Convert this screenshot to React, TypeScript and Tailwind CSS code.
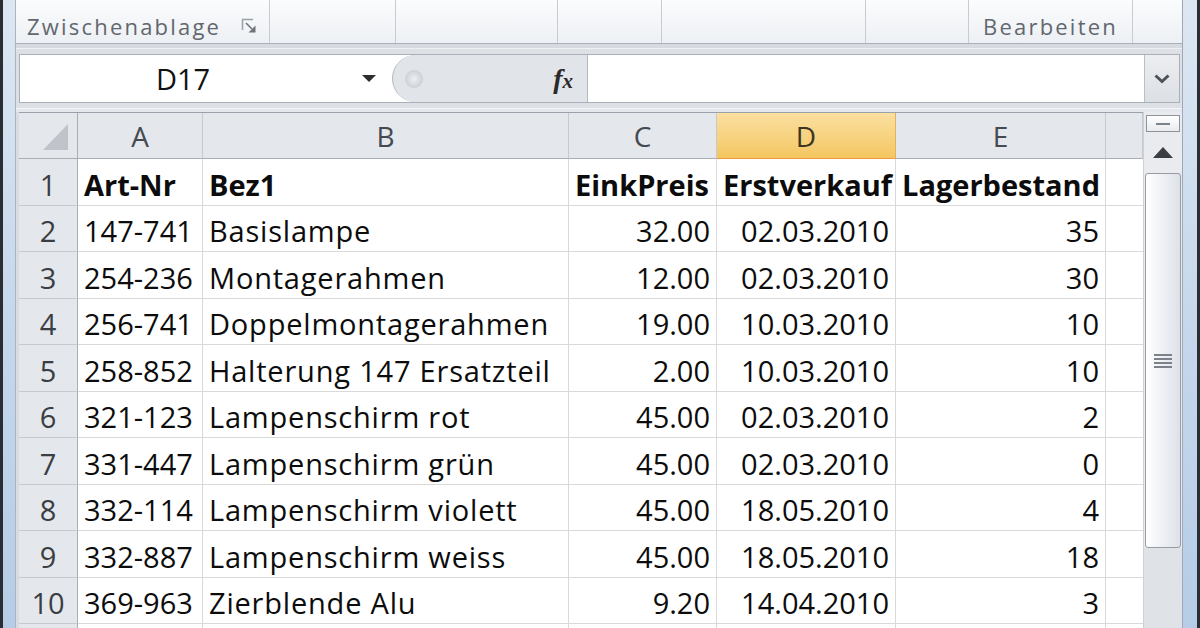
import React from "react";

type Row = [string, string, string, string, string];

const rows: Row[] = [
  ["Art-Nr", "Bez1", "EinkPreis", "Erstverkauf", "Lagerbestand"],
  ["147-741", "Basislampe", "32.00", "02.03.2010", "35"],
  ["254-236", "Montagerahmen", "12.00", "02.03.2010", "30"],
  ["256-741", "Doppelmontagerahmen", "19.00", "10.03.2010", "10"],
  ["258-852", "Halterung 147 Ersatzteil", "2.00", "10.03.2010", "10"],
  ["321-123", "Lampenschirm rot", "45.00", "02.03.2010", "2"],
  ["331-447", "Lampenschirm grün", "45.00", "02.03.2010", "0"],
  ["332-114", "Lampenschirm violett", "45.00", "18.05.2010", "4"],
  ["332-887", "Lampenschirm weiss", "45.00", "18.05.2010", "18"],
  ["369-963", "Zierblende Alu", "9.20", "14.04.2010", "3"],
];

const gridCols = "grid grid-cols-[59px_125px_366px_148px_179px_210px_37px]";

function DialogLauncher() {
  return (
    <svg width="16" height="16" viewBox="0 0 16 16" aria-hidden>
      <path d="M1.5 12 V1.5 H12" fill="none" stroke="#9aa0a8" strokeWidth="1.5" />
      <path d="M5 5 L11 11" stroke="#6f757d" strokeWidth="1.6" />
      <path d="M14.5 7.5 V14.5 H7.5 Z" fill="#6f757d" />
    </svg>
  );
}

function Ribbon() {
  const groups = ["w-[126px]", "w-[162px]", "w-[104px]", "w-[204px]", "w-[103px]"];
  return (
    <div className="flex h-[44px] shrink-0 border-b border-[#a9afb8] bg-linear-to-b from-[#fbfcfd] to-[#edf0f4] text-[22px] tracking-[2.2px] text-[#62676e]">
      {/* Zwischenablage group */}
      <div className="flex w-[254px] items-end justify-between border-r border-[#c7ccd3] pb-[2px] pl-[11px] pr-[12px]">
        <span className="leading-[30px]">Zwischenablage</span>
        <span className="mb-[7px]">
          <DialogLauncher />
        </span>
      </div>
      {groups.map((w, i) => (
        <div key={i} className={`${w} border-r border-[#c7ccd3]`} />
      ))}
      <div className="flex w-[164px] items-end justify-center border-r border-[#c7ccd3] pb-[2px]">
        <span className="leading-[30px]">Bearbeiten</span>
      </div>
      <div className="w-[49px]" />
    </div>
  );
}

function FormulaBar() {
  return (
    <div className="flex h-[68px] shrink-0 flex-col bg-[#dde1e6]">
      <div className="h-[5px] border-b border-[#eef0f3] bg-[#d6dae0]" />
      <div className="flex h-[54px] pl-[3px] pr-[2px] pt-[5px]">
        <div className="flex h-[49px] flex-1 border border-[#a9b0b9] bg-white">
          {/* Name box */}
          <div className="flex w-[372px] items-center">
            <span className="flex-1 text-center text-[29px] leading-none text-[#111]">D17</span>
            <span className="flex w-[46px] items-center justify-center">
              <svg width="14" height="8" viewBox="0 0 14 8" aria-hidden>
                <path d="M0 0 H14 L7 7 Z" fill="#2e2e2e" />
              </svg>
            </span>
          </div>
          {/* fx area */}
          <div className="flex w-[196px] items-center rounded-l-[24px] border-r border-l border-[#b4b9c0] bg-[#e1e4e8]">
            <span className="ml-[12px] h-[18px] w-[18px] rounded-full bg-radial from-[#eef0f2] to-[#bfc3c9]" />
            <span className="ml-auto mr-[14px] font-['Liberation_Serif',serif] text-[28px] font-bold italic leading-none text-[#2a2a2a]">
              f<span className="text-[21px]">x</span>
            </span>
          </div>
          {/* Formula input */}
          <div className="flex-1 bg-white" />
          {/* Expand button */}
          <div className="flex w-[35px] items-center justify-center border-l border-[#b9bfc7] bg-linear-to-b from-[#eceef1] to-[#dcdfe4]">
            <svg width="16" height="10" viewBox="0 0 16 10" aria-hidden>
              <path d="M1.5 1.5 L8 7.5 L14.5 1.5" fill="none" stroke="#4d5259" strokeWidth="3" />
            </svg>
          </div>
        </div>
      </div>
      <div className="mt-auto h-[4px] border-t border-[#f4f6f8] bg-[#e4e7eb]" />
    </div>
  );
}

function CornerCell() {
  return (
    <div className="flex items-end justify-end border-r border-b border-[#a9aeb5] bg-[#e4e7eb] pb-[8px] pr-[9px]">
      <svg width="25" height="26" viewBox="0 0 25 26" aria-hidden>
        <path d="M25 0 V26 H0 Z" fill="#c0c4ca" />
      </svg>
    </div>
  );
}

function Sheet() {
  const letters = ["A", "B", "C", "D", "E", ""];
  return (
    <div className="flex w-[1124px] shrink-0 flex-col overflow-hidden border-t border-[#9aa1aa] text-[29px] leading-none text-[#0c0c0c]">
      <div className={`${gridCols} h-[46px] shrink-0`}>
        <CornerCell />
        {letters.map((l, i) =>
          l === "D" ? (
            <div
              key={i}
              className="flex items-center justify-center border-r border-b border-r-[#e3b25e] border-b-[#ee9a3a] bg-linear-to-b from-[#fbe0a0] to-[#f4c660] text-[28px] text-[#3d3524]"
            >
              {l}
            </div>
          ) : (
            <div
              key={i}
              className="flex items-center justify-center border-r border-b border-r-[#c6cacf] border-b-[#a9aeb5] bg-[#e4e7eb] text-[28px] text-[#444a50]"
            >
              {l}
            </div>
          ),
        )}
      </div>
      {[...rows, null].map((r, i) => {
        const bold = i === 0;
        return (
          <div
            key={i}
            className={`${gridCols} shrink-0 ${i % 2 === 0 ? "h-[47px]" : "h-[46px]"}`}
          >
            <div className="flex items-center justify-center border-r border-b border-r-[#a9aeb5] border-b-[#c6cacf] bg-[#e4e7eb] pt-[4px] text-[#3a3e43]">
              {r ? i + 1 : null}
            </div>
            {r ? (
              r.map((v, j) => (
                <div
                  key={j}
                  className={`flex items-center whitespace-nowrap border-r border-b border-[#d9d9d9] px-[6px] pt-[4px] ${
                    bold
                      ? "justify-start font-bold"
                      : j === 1
                        ? "justify-start tracking-[0.8px]"
                        : j >= 2
                          ? "justify-end"
                          : "justify-start"
                  }`}
                >
                  {v}
                </div>
              ))
            ) : (
              <>
                <div className="border-r border-b border-[#d9d9d9]" />
                <div className="border-r border-b border-[#d9d9d9]" />
                <div className="border-r border-b border-[#d9d9d9]" />
                <div className="border-r border-b border-[#d9d9d9]" />
                <div className="border-r border-b border-[#d9d9d9]" />
              </>
            )}
            <div className="border-b border-[#d9d9d9]" />
          </div>
        );
      })}
    </div>
  );
}

function ScrollBar() {
  return (
    <div className="flex w-[39px] shrink-0 flex-col border-l border-[#cdd1d6] bg-[#e9ebee]">
      <div className="mx-[2px] mt-[3px] flex h-[17px] items-center justify-center border border-[#8d939b] bg-linear-to-b from-white to-[#e9ebef]">
        <span className="h-[2px] w-[14px] bg-[#7c828a]" />
      </div>
      <div className="flex h-[41px] items-center justify-center">
        <svg width="20" height="11" viewBox="0 0 20 11" aria-hidden>
          <path d="M10 0 L20 11 H0 Z" fill="#3b3f45" />
        </svg>
      </div>
      <div className="mx-[1px] flex h-[375px] items-center justify-center rounded-[3px] border border-[#979ca4] bg-linear-to-r from-white to-[#dde1e8]">
        <div className="flex w-[18px] flex-col gap-[2px]">
          <span className="h-[2px] bg-[#7d828a]" />
          <span className="h-[2px] bg-[#7d828a]" />
          <span className="h-[2px] bg-[#7d828a]" />
          <span className="h-[2px] bg-[#7d828a]" />
        </div>
      </div>
      <div className="flex-1 bg-[#dfe2e7]" />
    </div>
  );
}

export default function App() {
  return (
    <div className="flex h-[628px] w-[1200px] overflow-hidden bg-white font-['Open_Sans',sans-serif]">
      <div className="w-[3px] shrink-0 bg-[#2a2d31]" />
      <div className="w-[13px] shrink-0 border-r border-[#aab4c0] bg-linear-to-b from-[#dde7f2] via-[#c6d8ec] to-[#b6cde7]" />
      <div className="flex w-[1166px] shrink-0 flex-col">
        <Ribbon />
        <FormulaBar />
        <div className="flex min-h-0 flex-1">
          <div className="w-[3px] shrink-0 bg-[#d9dde3]" />
          <Sheet />
          <ScrollBar />
        </div>
      </div>
      <div className="w-[1px] shrink-0 bg-[#9fa8b4]" />
      <div className="w-[14px] shrink-0 bg-linear-to-b from-[#dde7f2] via-[#c6d8ec] to-[#b6cde7]" />
      <div className="w-[3px] shrink-0 bg-[#2a2d31]" />
    </div>
  );
}
